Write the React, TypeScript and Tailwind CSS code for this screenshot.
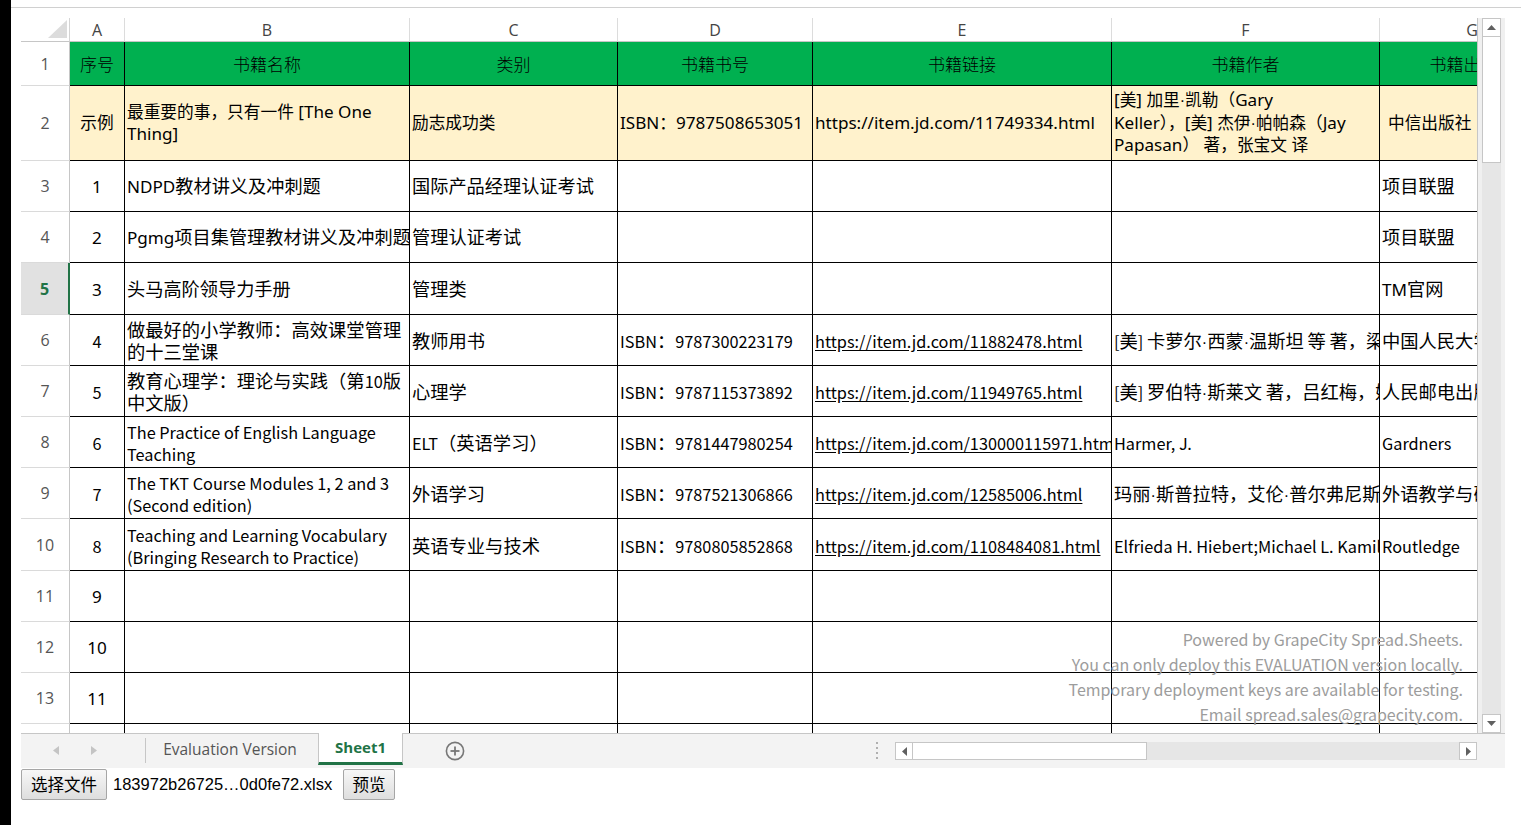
import React from "react";

const YH = "font-['Noto_Sans','Noto_Sans_CJK_SC',sans-serif] text-[18.2px]";
const YH2 = "font-['Noto_Sans','Noto_Sans_CJK_SC',sans-serif] text-[16.7px]";
const YH_LAT = "text-[17.1px]";
const CAL = "font-['Noto_Sans_CJK_SC',sans-serif] text-[18.3px]";
const CAL_LAT = "text-[16.3px]";
const UI = "font-['Open_Sans','Noto_Sans_CJK_SC',sans-serif]";

const COLW = ["w-[55px]", "w-[285px]", "w-[208px]", "w-[195px]", "w-[299px]", "w-[268px]", "w-[185px]"];
const LETTERS = ["A", "B", "C", "D", "E", "F", "G"];

type CellDef = { t?: string | string[]; c?: boolean; link?: boolean; pl?: string };
type RowDef = { n: number; h: string; bg: string; font: string; lat: string; cells: CellDef[]; sel?: boolean };

const ROWS: RowDef[] = [
  {
    n: 1,
    h: "h-[44px]",
    bg: "bg-[#00b050]",
    font: "font-['Noto_Sans_CJK_SC',sans-serif] text-[17px] font-light",
    lat: "",
    cells: [
      { t: "序号", c: true },
      { t: "书籍名称", c: true },
      { t: "类别", c: true },
      { t: "书籍书号", c: true },
      { t: "书籍链接", c: true },
      { t: "书籍作者", c: true },
      { t: "书籍出版社", c: true },
    ],
  },
  {
    n: 2,
    h: "h-[75px]",
    bg: "bg-[#fff2cc]",
    font: YH2,
    lat: YH_LAT,
    cells: [
      { t: "示例", c: true },
      { t: ["最重要的事，只有一件 [The One", "Thing]"] },
      { t: "励志成功类" },
      { t: "ISBN：9787508653051" },
      { t: "https://item.jd.com/11749334.html" },
      { t: ["[美] 加里·凯勒（Gary", "Keller），[美] 杰伊·帕帕森（Jay", "Papasan） 著，张宝文 译"] },
      { t: "中信出版社", pl: "pl-[8px]" },
    ],
  },
  {
    n: 3,
    h: "h-[51px]",
    bg: "bg-white",
    font: YH,
    lat: YH_LAT,
    cells: [{ t: "1", c: true }, { t: "NDPD教材讲义及冲刺题" }, { t: "国际产品经理认证考试" }, {}, {}, {}, { t: "项目联盟" }],
  },
  {
    n: 4,
    h: "h-[51px]",
    bg: "bg-white",
    font: YH,
    lat: YH_LAT,
    cells: [{ t: "2", c: true }, { t: "Pgmg项目集管理教材讲义及冲刺题" }, { t: "管理认证考试" }, {}, {}, {}, { t: "项目联盟" }],
  },
  {
    n: 5,
    h: "h-[52px]",
    bg: "bg-white",
    font: YH,
    lat: YH_LAT,
    sel: true,
    cells: [{ t: "3", c: true }, { t: "头马高阶领导力手册" }, { t: "管理类" }, {}, {}, {}, { t: "TM官网" }],
  },
  {
    n: 6,
    h: "h-[51px]",
    bg: "bg-white",
    font: CAL,
    lat: CAL_LAT,
    cells: [
      { t: "4", c: true },
      { t: ["做最好的小学教师：高效课堂管理", "的十三堂课"] },
      { t: "教师用书" },
      { t: "ISBN：9787300223179" },
      { t: "https://item.jd.com/11882478.html", link: true },
      { t: "[美] 卡萝尔·西蒙·温斯坦 等 著，梁雁 译" },
      { t: "中国人民大学出版社" },
    ],
  },
  {
    n: 7,
    h: "h-[51px]",
    bg: "bg-white",
    font: CAL,
    lat: CAL_LAT,
    cells: [
      { t: "5", c: true },
      { t: ["教育心理学：理论与实践（第10版", "中文版）"] },
      { t: "心理学" },
      { t: "ISBN：9787115373892" },
      { t: "https://item.jd.com/11949765.html", link: true },
      { t: "[美] 罗伯特·斯莱文 著，吕红梅，姚梅林 译" },
      { t: "人民邮电出版社" },
    ],
  },
  {
    n: 8,
    h: "h-[51px]",
    bg: "bg-white",
    font: CAL,
    lat: CAL_LAT,
    cells: [
      { t: "6", c: true },
      { t: ["The Practice of English Language", "Teaching"] },
      { t: "ELT（英语学习）" },
      { t: "ISBN：9781447980254" },
      { t: "https://item.jd.com/130000115971.html", link: true },
      { t: "Harmer, J." },
      { t: "Gardners" },
    ],
  },
  {
    n: 9,
    h: "h-[51px]",
    bg: "bg-white",
    font: CAL,
    lat: CAL_LAT,
    cells: [
      { t: "7", c: true },
      { t: ["The TKT Course Modules 1, 2 and 3", "(Second edition)"] },
      { t: "外语学习" },
      { t: "ISBN：9787521306866" },
      { t: "https://item.jd.com/12585006.html", link: true },
      { t: "玛丽·斯普拉特，艾伦·普尔弗尼斯，梅兰妮·威廉姆斯 著" },
      { t: "外语教学与研究出版社" },
    ],
  },
  {
    n: 10,
    h: "h-[52px]",
    bg: "bg-white",
    font: CAL,
    lat: CAL_LAT,
    cells: [
      { t: "8", c: true },
      { t: ["Teaching and Learning Vocabulary", "(Bringing Research to Practice)"] },
      { t: "英语专业与技术" },
      { t: "ISBN：9780805852868" },
      { t: "https://item.jd.com/1108484081.html", link: true },
      { t: "Elfrieda H. Hiebert;Michael L. Kamil" },
      { t: "Routledge" },
    ],
  },
  { n: 11, h: "h-[51px]", bg: "bg-white", font: YH, lat: YH_LAT, cells: [{ t: "9", c: true }, {}, {}, {}, {}, {}, {}] },
  { n: 12, h: "h-[51px]", bg: "bg-white", font: YH, lat: YH_LAT, cells: [{ t: "10", c: true }, {}, {}, {}, {}, {}, {}] },
  { n: 13, h: "h-[51px]", bg: "bg-white", font: YH, lat: YH_LAT, cells: [{ t: "11", c: true }, {}, {}, {}, {}, {}, {}] },
  { n: 14, h: "h-[51px]", bg: "bg-white", font: YH, lat: YH_LAT, cells: [{ t: "12", c: true }, {}, {}, {}, {}, {}, {}] },
];

function renderText(s: string, lat: string) {
  const parts = s.split(/([\x20-\x7e]+|·)/);
  return parts.map((p, k) => {
    if (!p) return null;
    if (p === "·")
      return (
        <span key={k} className="font-['Liberation_Sans',sans-serif] text-[16px]">
          ·
        </span>
      );
    if (/^[\x20-\x7e]+$/.test(p))
      return (
        <span key={k} className={lat}>
          {p}
        </span>
      );
    return <span key={k}>{p}</span>;
  });
}

function Cell({ def, i, bg, font, lat }: { def: CellDef; i: number; bg: string; font: string; lat: string }) {
  const lines = def.t === undefined ? [] : Array.isArray(def.t) ? def.t : [def.t];
  const lh = lines.length > 2 ? "h-[22.5px] leading-[22.5px]" : "h-[22px] leading-[22px]";
  return (
    <div
      className={`${COLW[i]} ${bg} shrink-0 h-full border-r border-b border-black overflow-hidden flex items-center ${
        def.c ? "justify-center text-center" : `justify-start ${def.pl ?? "pl-[2px]"}`
      }`}
    >
      <div className={`${font} text-black whitespace-nowrap`}>
        {lines.map((l, k) => (
          <div key={k} className={`${lh} ${def.link ? "underline underline-offset-2" : ""}`}>
            {renderText(l, lat)}
          </div>
        ))}
      </div>
    </div>
  );
}

function Grid() {
  return (
    <div className="relative w-[1456px] h-full overflow-hidden flex flex-col bg-white">
      <div className="flex h-[24px] shrink-0">
        <div className="w-[49px] shrink-0 h-full border-r border-b border-r-[#d4d4d4] border-b-[#c6c6c6] flex items-end justify-end pr-[2px] pb-[3px]">
          <svg width="19" height="18" viewBox="0 0 19 18">
            <polygon points="19,0 19,18 0,18" fill="#dcdcdc" />
          </svg>
        </div>
        {LETTERS.map((l, i) => (
          <div
            key={l}
            className={`${COLW[i]} shrink-0 h-full border-r border-b border-r-[#dcdcdc] border-b-[#c6c6c6] flex items-center justify-center ${UI} text-[16px] text-[#444]`}
          >
            {l}
          </div>
        ))}
      </div>
      {ROWS.map((r) => (
        <div key={r.n} className={`flex ${r.h} shrink-0`}>
          <div
            className={`w-[49px] shrink-0 h-full border-b border-b-[#dadada] flex items-center justify-center ${UI} text-[16px] ${
              r.sel
                ? "bg-[#e1e1e1] border-r-2 border-r-[#217346] text-[#217346] font-bold"
                : "bg-white border-r border-r-[#c6c6c6] text-[#555]"
            }`}
          >
            {r.n}
          </div>
          {r.cells.map((c, i) => (
            <Cell key={i} def={c} i={i} bg={r.bg} font={r.font} lat={r.lat} />
          ))}
        </div>
      ))}
      <div className="absolute right-[14px] top-[609px] text-right font-['Noto_Sans_CJK_SC',sans-serif] text-[16px] leading-[25px] text-[#9c9c9c] whitespace-nowrap">
        <div>Powered by GrapeCity Spread.Sheets.</div>
        <div>You can only deploy this EVALUATION version locally.</div>
        <div>Temporary deployment keys are available for testing.</div>
        <div>Email spread.sales@grapecity.com.</div>
      </div>
    </div>
  );
}

function VScroll() {
  return (
    <div className="w-[28px] h-full bg-[#f0f0f0] border-l border-[#c6c6c6] flex">
      <div className="ml-[4px] w-[19px] h-full bg-[#e6e6e6] flex flex-col">
        <div className="h-[19px] bg-white border border-[#c6c6c6] flex items-center justify-center">
          <svg width="9" height="5" viewBox="0 0 9 5">
            <polygon points="0,5 9,5 4.5,0" fill="#606060" />
          </svg>
        </div>
        <div className="h-[126px] bg-white border border-[#c6c6c6] border-t-0" />
        <div className="flex-1" />
        <div className="h-[19px] bg-white border border-[#c6c6c6] flex items-center justify-center">
          <svg width="9" height="5" viewBox="0 0 9 5">
            <polygon points="0,0 9,0 4.5,5" fill="#606060" />
          </svg>
        </div>
      </div>
    </div>
  );
}

function TabBar() {
  return (
    <div className="h-[35px] shrink-0 bg-[#f3f3f3] border-t border-[#c6c6c6] flex items-start">
      <div className="w-[125px] h-[25px] mt-[4px] flex items-center border-r border-[#c6c6c6]">
        <div className="w-[70px] flex justify-center">
          <svg width="6" height="9" viewBox="0 0 6 9">
            <polygon points="6,0 6,9 0,4.5" fill="#c4c4c4" />
          </svg>
        </div>
        <svg width="6" height="9" viewBox="0 0 6 9">
          <polygon points="0,0 0,9 6,4.5" fill="#c4c4c4" />
        </svg>
      </div>
      <div className="w-[172px] h-[31px] pr-[4px] flex items-center justify-center font-['Open_Sans',sans-serif] text-[15.5px] text-[#555]">
        Evaluation Version
      </div>
      <div className="w-[85px] h-[32px] bg-white border-x border-[#c6c6c6] border-b-[3px] border-b-[#217346] flex items-center justify-center font-['Open_Sans',sans-serif] text-[15px] font-bold text-[#217346] -mt-[1px]">
        Sheet1
      </div>
      <div className="w-[104px] h-[33px] flex items-center justify-center">
        <svg width="20" height="20" viewBox="0 0 20 20">
          <circle cx="10" cy="10" r="8.6" fill="none" stroke="#777" strokeWidth="1.6" />
          <line x1="10" y1="5.5" x2="10" y2="14.5" stroke="#777" strokeWidth="1.8" />
          <line x1="5.5" y1="10" x2="14.5" y2="10" stroke="#777" strokeWidth="1.8" />
        </svg>
      </div>
      <div className="w-[361px]" />
      <div className="w-[17px] h-[33px] flex flex-col items-center justify-center gap-[3px]">
        <div className="w-[2px] h-[2px] bg-[#b0b0b0]" />
        <div className="w-[2px] h-[2px] bg-[#b0b0b0]" />
        <div className="w-[2px] h-[2px] bg-[#b0b0b0]" />
        <div className="w-[2px] h-[2px] bg-[#b0b0b0]" />
      </div>
      <div className="ml-[10px] mt-[8px] w-[582px] h-[18px] bg-[#e6e6e6] flex">
        <div className="w-[18px] h-full bg-white border border-[#c6c6c6] flex items-center justify-center">
          <svg width="5" height="9" viewBox="0 0 5 9">
            <polygon points="5,0 5,9 0,4.5" fill="#606060" />
          </svg>
        </div>
        <div className="w-[234px] h-full bg-white border border-[#c6c6c6] border-l-0" />
        <div className="flex-1" />
        <div className="w-[18px] h-full bg-white border border-[#c6c6c6] flex items-center justify-center">
          <svg width="5" height="9" viewBox="0 0 5 9">
            <polygon points="0,0 0,9 5,4.5" fill="#606060" />
          </svg>
        </div>
      </div>
    </div>
  );
}

function FileRow() {
  const btn =
    "h-[31px] border border-[#a6a6a6] rounded-[2px] bg-gradient-to-b from-[#f7f7f7] to-[#dedede] flex items-center justify-center font-['Noto_Sans_CJK_SC',sans-serif] text-[16.5px] text-black";
  return (
    <div className="ml-[10px] flex items-center h-[32px]">
      <div className={`${btn} w-[86px]`}>选择文件</div>
      <div className="ml-[6px] w-[230px] font-['Liberation_Sans',Arial,sans-serif] text-[16.5px] text-black">
        183972b26725…0d0fe72.xlsx
      </div>
      <div className={`${btn} w-[52px]`}>预览</div>
    </div>
  );
}

export default function App() {
  return (
    <div className="w-[1521px] h-[825px] bg-white flex overflow-hidden">
      <div className="w-[11px] h-full bg-black shrink-0" />
      <div className="flex-1 flex flex-col min-w-0">
        <div className="h-[7px] shrink-0" />
        <div className="h-[11px] shrink-0 border-t border-[#d0d0d0]" />
        <div className="ml-[10px] w-[1484px] h-[750px] shrink-0 flex flex-col">
          <div className="h-[715px] shrink-0 flex">
            <Grid />
            <VScroll />
          </div>
          <TabBar />
        </div>
        <FileRow />
      </div>
    </div>
  );
}
